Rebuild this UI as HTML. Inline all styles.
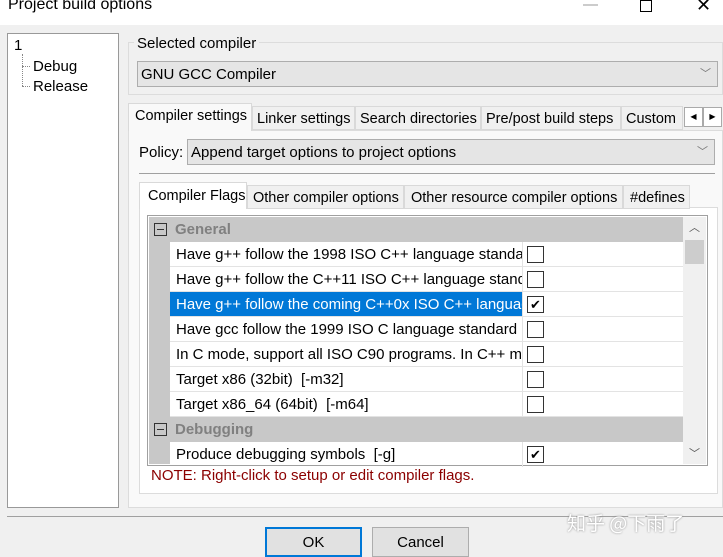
<!DOCTYPE html><html><head><style>
*{margin:0;padding:0;box-sizing:border-box}
body{width:723px;height:555px;background:#f0f0f0;font-family:"Liberation Sans",sans-serif;font-size:15px;color:#000;position:relative;overflow:hidden}
.a{position:absolute}
.combo{background:#e5e5e5;border:1px solid #adadad}
.tab{position:absolute;background:#f0f0f0;border:1px solid #d9d9d9;padding:4px 0 0 4px;height:24px;white-space:nowrap;overflow:hidden;font-size:14.5px}
.row{position:absolute;left:170px;width:513px;height:25px;background:#fff;border-bottom:1px solid #e3e3e3}
.row .t{position:absolute;left:0;padding-left:6px;top:0;padding-top:4px;height:24px;width:352px;overflow:hidden;white-space:nowrap}
.row .c{position:absolute;left:352px;top:0;width:1px;height:25px;background:#e3e3e3}
.cb{position:absolute;left:357px;top:4px;width:17px;height:17px;border:1px solid #333;background:#fff;font-size:13px;line-height:15px;text-align:center}
.hdr{position:absolute;left:149px;width:534px;height:25px;background:#c8c8c8;color:#808080;font-weight:bold;padding:4px 0 0 26px;font-size:15px}
.hdr .m{position:absolute;left:5px;top:6px;width:13px;height:13px;border:1px solid #333;font-weight:normal}
.hdr .m:after{content:"";position:absolute;left:2px;top:5px;width:7px;height:1px;background:#333}
</style></head><body>
<div class="a" style="left:0;top:0;width:723px;height:25px;background:#fff"></div>
<div class="a" style="left:8px;top:-4px;font-size:16px">Project build options</div>
<div class="a" style="left:583px;top:-4px;color:#999">—</div>
<div class="a" style="left:640px;top:0;width:12px;height:12px;border:1px solid #000"></div>
<div class="a" style="left:696px;top:-5px;font-size:18px">✕</div>

<div class="a" style="left:7px;top:33px;width:112px;height:475px;background:#fff;border:1px solid #999"></div>
<div class="a" style="left:14px;top:37px">1</div>
<div class="a" style="left:22px;top:54px;width:1px;height:32px;border-left:1px dotted #888"></div>
<div class="a" style="left:22px;top:66px;width:8px;border-top:1px dotted #888"></div>
<div class="a" style="left:22px;top:86px;width:8px;border-top:1px dotted #888"></div>
<div class="a" style="left:33px;top:58px">Debug</div>
<div class="a" style="left:33px;top:78px">Release</div>

<div class="a" style="left:128px;top:42px;width:595px;height:53px;border:1px solid #dcdcdc"></div>
<div class="a" style="left:134px;top:35px;background:#f0f0f0;padding:0 3px">Selected compiler</div>
<div class="a combo" style="left:137px;top:61px;width:581px;height:26px"><span class="a" style="left:3px;top:4px">GNU GCC Compiler</span><span class="a" style="right:6px;top:3px;color:#777;font-size:11px">﹀</span></div>

<div class="a" style="left:128px;top:130px;width:595px;height:378px;background:#f9f9f9;border:1px solid #dcdcdc"></div>
<div class="tab" style="left:252px;top:106px;width:103px">Linker settings</div>
<div class="tab" style="left:355px;top:106px;width:126px">Search directories</div>
<div class="tab" style="left:481px;top:106px;width:140px">Pre/post build steps</div>
<div class="tab" style="left:621px;top:106px;width:62px">Custom</div>
<div class="tab" style="left:128px;top:103px;width:124px;background:#f9f9f9;border-bottom:none;height:28px;padding:4px 0 0 6px;z-index:2">Compiler settings</div>
<div class="a" style="left:684px;top:107px;width:19px;height:20px;border:1px solid #aaa;background:#fff;font-size:8px;text-align:center;line-height:18px">◀</div>
<div class="a" style="left:703px;top:107px;width:19px;height:20px;border:1px solid #aaa;background:#fff;font-size:8px;text-align:center;line-height:18px">▶</div>

<div class="a" style="left:139px;top:144px">Policy:</div>
<div class="a combo" style="left:187px;top:139px;width:528px;height:26px"><span class="a" style="left:3px;top:4px">Append target options to project options</span><span class="a" style="right:6px;top:3px;color:#777;font-size:11px">﹀</span></div>
<div class="a" style="left:139px;top:173px;width:576px;height:1px;background:#a0a0a0"></div>

<div class="a" style="left:139px;top:207px;width:579px;height:287px;background:#fff;border:1px solid #dcdcdc"></div>
<div class="tab" style="left:247px;top:185px;width:157px;padding-left:5px">Other compiler options</div>
<div class="tab" style="left:404px;top:185px;width:219px;padding-left:6px">Other resource compiler options</div>
<div class="tab" style="left:623px;top:185px;width:67px;padding-left:6px">#defines</div>
<div class="tab" style="left:139px;top:182px;width:108px;background:#fff;border-bottom:none;height:27px;padding:5px 0 0 8px;z-index:2">Compiler Flags</div>

<div class="a" style="left:147px;top:215px;width:561px;height:251px;border:1px solid #a0a0a0;background:#fff"></div>
<div class="a" style="left:149px;top:217px;width:21px;height:247px;background:#c8c8c8"></div>
<div class="a" style="left:683px;top:217px;width:23px;height:247px;background:#f0f0f0"></div>
<div class="a" style="left:685px;top:240px;width:19px;height:24px;background:#cdcdcd"></div>
<div class="a" style="left:689px;top:219px;font-size:11px;color:#555">︿</div>
<div class="a" style="left:689px;top:445px;font-size:11px;color:#555">﹀</div>

<div class="hdr" style="top:217px"><span class="m"></span>General</div>
<div class="row" style="top:242px"><div class="t">Have g++ follow the 1998 ISO C++ language standard</div><div class="c"></div><div class="cb"></div></div>
<div class="row" style="top:267px"><div class="t">Have g++ follow the C++11 ISO C++ language standard</div><div class="c"></div><div class="cb"></div></div>
<div class="row" style="top:292px"><div class="t" style="background:#0078d7;color:#fff">Have g++ follow the coming C++0x ISO C++ language</div><div class="c"></div><div class="cb">✔</div></div>
<div class="row" style="top:317px"><div class="t">Have gcc follow the 1999 ISO C language standard &nbsp;[</div><div class="c"></div><div class="cb"></div></div>
<div class="row" style="top:342px"><div class="t">In C mode, support all ISO C90 programs. In C++ mode</div><div class="c"></div><div class="cb"></div></div>
<div class="row" style="top:367px"><div class="t">Target x86 (32bit) &nbsp;[-m32]</div><div class="c"></div><div class="cb"></div></div>
<div class="row" style="top:392px"><div class="t">Target x86_64 (64bit) &nbsp;[-m64]</div><div class="c"></div><div class="cb"></div></div>
<div class="hdr" style="top:417px"><span class="m"></span>Debugging</div>
<div class="row" style="top:442px;height:22px;border:none"><div class="t">Produce debugging symbols &nbsp;[-g]</div><div class="c"></div><div class="cb">✔</div></div>

<div class="a" style="left:151px;top:467px;color:#8b0000">NOTE: Right-click to setup or edit compiler flags.</div>

<div class="a" style="left:7px;top:516px;width:716px;height:1px;background:#a0a0a0"></div>
<div class="a" style="left:265px;top:527px;width:97px;height:30px;border:2px solid #0078d7;background:#e1e1e1;text-align:center;padding-top:5px">OK</div>
<div class="a" style="left:372px;top:527px;width:97px;height:30px;border:1px solid #adadad;background:#e1e1e1;text-align:center;padding-top:6px">Cancel</div>
<div class="a" style="left:567px;top:509px;font-family:'Noto Sans CJK SC',sans-serif;font-size:19px;color:#fff;text-shadow:0 0 2px #888">知乎 @下雨了</div>
</body></html>
